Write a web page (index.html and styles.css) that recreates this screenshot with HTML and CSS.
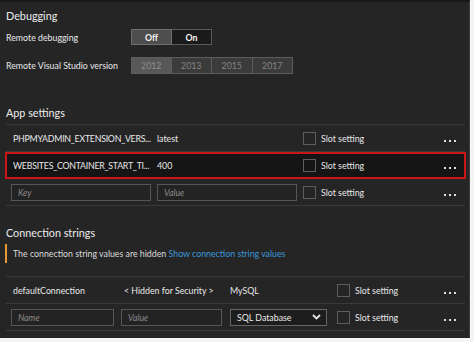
FILE: index.html
```html
<!DOCTYPE html>
<html>
<head>
<meta charset="utf-8">
<link rel="stylesheet" href="styles.css">
</head>
<body>
<div class="panel">
  <section class="debug">
    <h2 class="heading">Debugging</h2>
    <div class="field">
      <span class="label">Remote debugging</span>
      <div class="seg">
        <span class="seg-btn seg-sel">Off</span>
        <span class="seg-btn seg-dark">On</span>
      </div>
    </div>
    <div class="field field-ver">
      <span class="label">Remote Visual Studio version</span>
      <div class="seg seg-dis">
        <span class="ver ver-sel">2012</span>
        <span class="ver">2013</span>
        <span class="ver">2015</span>
        <span class="ver">2017</span>
      </div>
    </div>
  </section>

  <section class="app">
    <h2 class="heading heading-app">App settings</h2>
    <div class="list">
      <div class="row app-row">
        <span class="cell key key-caps">PHPMYADMIN_EXTENSION_VERS...</span>
        <span class="cell">latest</span>
        <span class="slot"><span class="box"></span>Slot setting</span>
        <svg class="dots" width="12" height="12" viewBox="0 0 12 12"><rect x="0" y="8" width="2" height="2"/><rect x="5" y="8" width="2" height="2"/><rect x="10" y="8" width="2" height="2"/></svg>
      </div>
      <div class="row app-row row-hl">
        <span class="cell key key-caps">WEBSITES_CONTAINER_START_TI...</span>
        <span class="cell">400</span>
        <span class="slot"><span class="box"></span>Slot setting</span>
        <svg class="dots" width="12" height="12" viewBox="0 0 12 12"><rect x="0" y="8" width="2" height="2"/><rect x="5" y="8" width="2" height="2"/><rect x="10" y="8" width="2" height="2"/></svg>
      </div>
      <div class="row app-row">
        <input class="inp" type="text" placeholder="Key">
        <input class="inp" type="text" placeholder="Value">
        <span class="slot"><span class="box"></span>Slot setting</span>
        <svg class="dots" width="12" height="12" viewBox="0 0 12 12"><rect x="0" y="8" width="2" height="2"/><rect x="5" y="8" width="2" height="2"/><rect x="10" y="8" width="2" height="2"/></svg>
      </div>
    </div>
  </section>

  <section class="conn">
    <h2 class="heading heading-conn">Connection strings</h2>
    <div class="info">The connection string values are hidden <a class="link" href="#">Show connection string values</a></div>
    <div class="list list-conn">
      <div class="row conn-row">
        <span class="cell key">defaultConnection</span>
        <span class="cell hidden">&lt; Hidden for Security &gt;</span>
        <span class="cell type">MySQL</span>
        <span class="slot slot-conn"><span class="box"></span>Slot setting</span>
        <svg class="dots" width="12" height="12" viewBox="0 0 12 12"><rect x="0" y="8" width="2" height="2"/><rect x="5" y="8" width="2" height="2"/><rect x="10" y="8" width="2" height="2"/></svg>
      </div>
      <div class="row conn-row">
        <input class="inp" type="text" placeholder="Name">
        <input class="inp" type="text" placeholder="Value">
        <div class="select type-sel">
          <span>SQL Database</span>
          <svg width="9" height="6" viewBox="0 0 9 6"><path d="M1 1 L4.5 4.5 L8 1" fill="none" stroke="#e8e8e8" stroke-width="1.8"/></svg>
        </div>
        <span class="slot slot-conn"><span class="box"></span>Slot setting</span>
        <svg class="dots" width="12" height="12" viewBox="0 0 12 12"><rect x="0" y="8" width="2" height="2"/><rect x="5" y="8" width="2" height="2"/><rect x="10" y="8" width="2" height="2"/></svg>
      </div>
    </div>
  </section>
</div>
</body>
</html>
```

FILE: styles.css
```css
html, body {
  margin: 0;
  padding: 0;
  background: #f4f4f4;
}

body {
  font-family: Lato, "Open Sans", sans-serif;
  font-size: 8.8px;
  color: #e8e8e8;
}

.panel {
  box-sizing: border-box;
  width: 470px;
  height: 338px;
  background: #252526;
  border-top: 2px solid #191919;
  border-right: 1px solid #3e3e3e;
  padding: 6px 4px 0 6px;
  overflow: hidden;
}

.heading {
  margin: 0;
  font-size: 10.8px;
  font-weight: normal;
  line-height: 16px;
  height: 16px;
  color: #ececec;
}

.field {
  display: flex;
  align-items: center;
  margin-top: 5px;
  height: 16px;
}

.field-ver {
  margin-top: 12px;
  height: 17px;
}

.label {
  width: 125px;
  flex: none;
  white-space: nowrap;
}

.seg {
  display: flex;
  height: 100%;
}

.seg-btn {
  box-sizing: border-box;
  width: 41px;
  height: 16px;
  display: flex;
  align-items: center;
  justify-content: center;
  font-weight: bold;
  color: #f2f2f2;
  border: 1px solid #5a5a5a;
}

.seg-sel {
  background: #4e4e4e;
  border-color: #6e6e6e;
}

.seg-dark {
  background: #1a1a1a;
  border-left: none;
  width: 40px;
}

.ver {
  box-sizing: border-box;
  width: 40.5px;
  height: 17px;
  display: flex;
  align-items: center;
  justify-content: center;
  background: #3b3b3b;
  color: #858585;
  border: 1px solid #5c5c5c;
  border-left: none;
}

.ver:first-child {
  border-left: 1px solid #5c5c5c;
}

.ver-sel {
  background: #585858;
  color: #8e8e8e;
}

.heading-app {
  margin-top: 31px;
}

.heading-conn {
  margin-top: 19px;
}

.list {
  margin-top: 3px;
  border-top: 1px solid #3a3a3a;
}

.row {
  display: grid;
  align-items: center;
  height: 26px;
  padding: 0 9px 0 5px;
  border-bottom: 1px solid #3a3a3a;
}

.app-row {
  grid-template-columns: 140px 140px 1fr 12px;
  column-gap: 6px;
}

.row-hl {
  background: #151515;
  outline: 2px solid #c8161b;
  outline-offset: -2px;
  margin: 0 -1px;
  padding: 0 10px 0 6px;
}

.cell {
  white-space: nowrap;
}

.key {
  padding-left: 2px;
}

.key-caps {
  letter-spacing: -0.25px;
}

.slot {
  display: flex;
  align-items: center;
  gap: 5px;
}

.box {
  box-sizing: border-box;
  width: 13px;
  height: 13px;
  border: 1px solid #5e5e5e;
}

.dots {
  fill: #e0e0e0;
}

.inp {
  box-sizing: border-box;
  width: 100%;
  height: 17px;
  margin: 0;
  padding: 0 6px;
  background: #232323;
  border: 1px solid #565656;
  border-radius: 0;
  font-family: Lato, "Open Sans", sans-serif;
  font-size: 8.8px;
  color: #e4e4e4;
  outline: none;
}

.inp::placeholder {
  color: #8a8a8a;
  font-style: italic;
}

.info {
  margin: 3px 0 0 -1px;
  height: 19px;
  line-height: 19px;
  border-left: 2px solid #e29a35;
  padding-left: 6px;
  color: #dcdcdc;
}

.link {
  color: #3b98d8;
  text-decoration: none;
}

.list-conn {
  margin-top: 13px;
}

.conn-row {
  grid-template-columns: 103px 101px 98px 1fr 12px;
  column-gap: 7px;
}

.hidden {
  padding-left: 3px;
}

.type {
  margin-left: 1px;
}

.type-sel {
  margin-left: 1px;
}

.slot-conn {
  margin-left: 3px;
}

.select {
  box-sizing: border-box;
  height: 17px;
  display: flex;
  align-items: center;
  justify-content: space-between;
  padding: 0 5px 0 6px;
  border: 1px solid #666;
  background: #1d1d1d;
  color: #ececec;
}
```
